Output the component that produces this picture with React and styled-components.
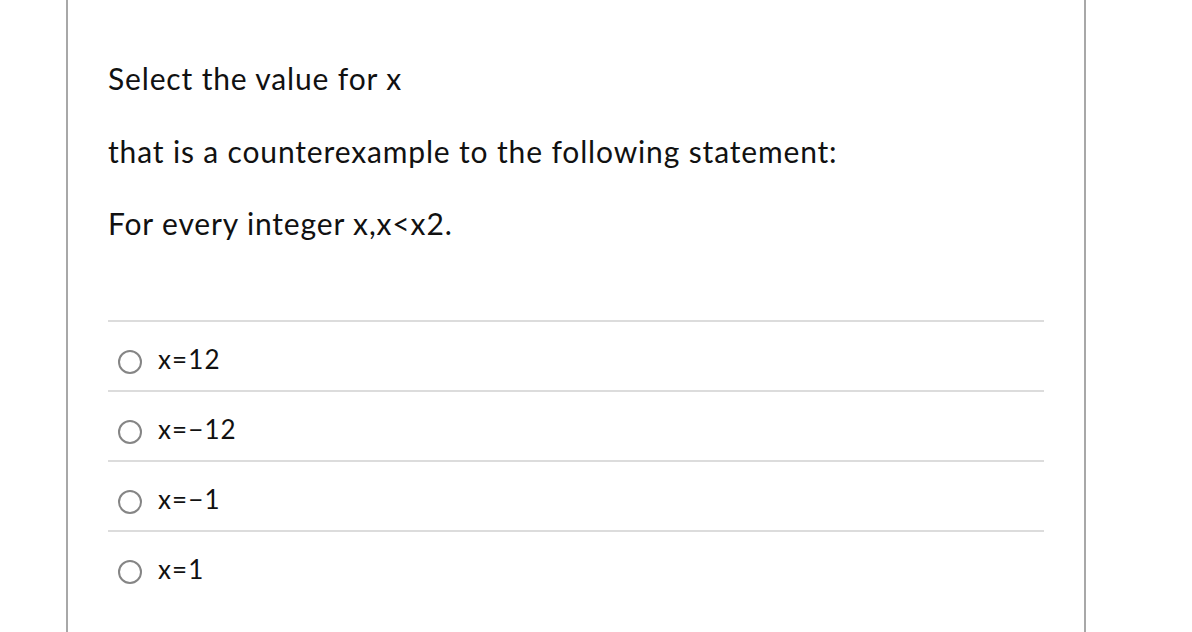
import React from "react";
import styled, { createGlobalStyle } from "styled-components";

const Global = createGlobalStyle`
  html, body { margin: 0; padding: 0; background: #fff; }
  body { font-family: Lato, "Noto Sans", sans-serif; color: #111; }
`;

const Panel = styled.div`
  box-sizing: border-box;
  margin-left: 66px;
  width: 1020px;
  height: 632px;
  border-left: 2px solid #a8a8a8;
  border-right: 2px solid #a8a8a8;
  padding: 60px 40px 0 40px;
  overflow: hidden;
`;

const Question = styled.div`
  display: flex;
  flex-direction: column;
  gap: 36.5px;
`;

const Para = styled.p`
  margin: 0;
  font-size: 30px;
  line-height: 36px;
  letter-spacing: 0.85px;
`;

const Answers = styled.div`
  margin-top: 79px;
  display: flex;
  flex-direction: column;
`;

const Row = styled.label`
  box-sizing: border-box;
  height: 70px;
  display: flex;
  align-items: flex-start;
  border-top: 2px solid #dcdcdc;
  padding: 23px 0 17px 10px;
  gap: 16px;
`;

const Radio = styled.span`
  box-sizing: border-box;
  width: 24px;
  height: 24px;
  margin-top: 5px;
  border-radius: 50%;
  border: 2px solid #858585;
  flex-shrink: 0;
`;

const Label = styled.span`
  font-size: 26px;
  line-height: 28px;
  letter-spacing: 1.1px;
`;

const options = ["x=12", "x=\u221212", "x=\u22121", "x=1"];

export default function App() {
  return (
    <>
      <Global />
      <Panel>
        <Question>
          <Para>Select the value for x</Para>
          <Para>that is a counterexample to the following statement:</Para>
          <Para>For every integer x,x&lt;x2.</Para>
        </Question>
        <Answers>
          {options.map((o) => (
            <Row key={o}>
              <Radio />
              <Label>{o}</Label>
            </Row>
          ))}
        </Answers>
      </Panel>
    </>
  );
}
